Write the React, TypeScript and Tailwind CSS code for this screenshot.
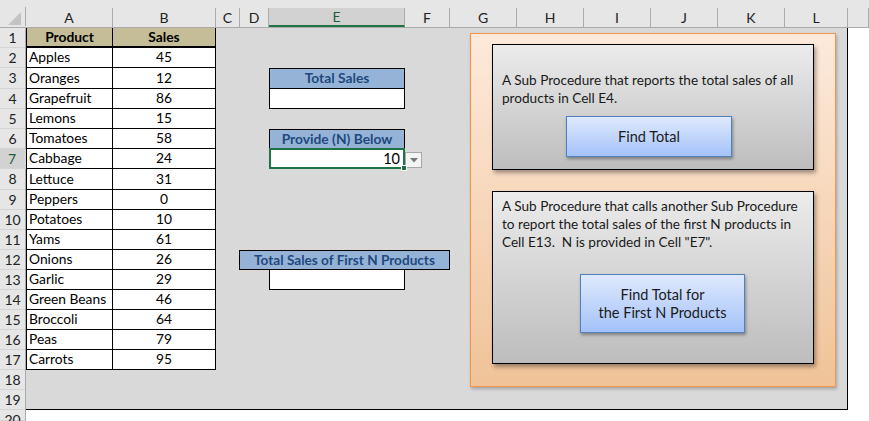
import React from "react";

const colHeaders = [
  { label: "A", w: "w-[87px]" },
  { label: "B", w: "w-[103px]" },
  { label: "C", w: "w-[24px]" },
  { label: "D", w: "w-[29px]" },
  { label: "E", w: "w-[136px]", selected: true },
  { label: "F", w: "w-[45px]" },
  { label: "G", w: "w-[67px]" },
  { label: "H", w: "w-[67px]" },
  { label: "I", w: "w-[67px]" },
  { label: "J", w: "w-[67px]" },
  { label: "K", w: "w-[67px]" },
  { label: "L", w: "w-[63px]" },
  { label: "", w: "w-[21px]" },
];

const products: [string, number][] = [
  ["Apples", 45],
  ["Oranges", 12],
  ["Grapefruit", 86],
  ["Lemons", 15],
  ["Tomatoes", 58],
  ["Cabbage", 24],
  ["Lettuce", 31],
  ["Peppers", 0],
  ["Potatoes", 10],
  ["Yams", 61],
  ["Onions", 26],
  ["Garlic", 29],
  ["Green Beans", 46],
  ["Broccoli", 64],
  ["Peas", 79],
  ["Carrots", 95],
];

// rows 3 and 8 are a pixel taller in the capture
const tallRows = [3, 8];

export default function App() {
  const rows = Array.from({ length: 20 }, (_, i) => i + 1);

  return (
    <div className="w-[869px] h-[421px] overflow-hidden bg-white text-[#222] font-['Lato','Liberation_Sans',sans-serif]">
      {/* column headers */}
      <div className="flex h-[28px] bg-[#e6e6e6] pt-[8px] border-b border-[#ababab]">
        <div className="w-[26px] h-[19px] border-r border-[#ababab] flex items-end justify-end pr-[4px] pb-[1px] -mt-[1px]">
          <svg width="13" height="13" viewBox="0 0 13 13">
            <polygon points="13,0 13,13 0,13" fill="#c3c3c3" />
          </svg>
        </div>
        {colHeaders.map((c) => (
          <div
            key={c.label + c.w}
            className={
              c.selected
                ? `${c.w} h-[19px] bg-[#d2d2d2] border-b-2 border-[#217346] border-r border-r-[#ababab] flex items-center justify-center text-[14px] text-[#1e5e40]`
                : `${c.w} h-[19px] border-r border-[#ababab] flex items-center justify-center text-[14px]`
            }
          >
            {c.label}
          </div>
        ))}
      </div>

      <div className="flex">
        {/* row headers */}
        <div className="w-[26px] flex flex-col bg-[#e6e6e6] border-r border-[#ababab]">
          {rows.map((r) => (
            <div
              key={r}
              className={[
                r === 20 ? "h-[11px] items-start pt-[3px]" : tallRows.includes(r) ? "h-[21px] items-center" : "h-[20px] items-center",
                r === 7
                  ? "bg-[#d2d2d2] border-r-2 border-[#217346] -mr-[1px] text-[#1e5e40]"
                  : "",
                "flex justify-center border-b border-[#d4d4d4] text-[14px] leading-none",
              ].join(" ")}
            >
              {r}
            </div>
          ))}
        </div>

        {/* sheet */}
        <div className="grid grid-cols-[87px_103px_24px_29px_136px_45px_67px_67px_67px_67px_67px_63px_21px] grid-rows-[20px_20px_21px_20px_20px_20px_20px_21px_20px_20px_20px_20px_20px_20px_20px_20px_20px_20px_20px_11px]">
          {/* gray filled range A1:L19 */}
          <div className="col-start-1 col-end-13 row-start-1 row-end-20 bg-[#d9d9d9] border-r border-b border-black" />

          {/* product table A1:B17 */}
          <div className="col-start-1 col-end-3 row-start-1 row-end-18 grid grid-cols-[87px_103px] grid-rows-[20px_20px_21px_20px_20px_20px_20px_21px_20px_20px_20px_20px_20px_20px_20px_20px_20px] text-[13.8px] text-black">
            <div className="bg-[#c4bd97] border-l border-r border-b-2 border-black font-bold flex items-center justify-center">
              Product
            </div>
            <div className="bg-[#c4bd97] border-r border-b-2 border-black font-bold flex items-center justify-center">
              Sales
            </div>
            {products.map(([name, sales]) => (
              <React.Fragment key={name}>
                <div className="bg-white border-l border-r border-b border-black flex items-center pl-[2px]">
                  {name}
                </div>
                <div className="bg-white border-r border-b border-black flex items-center justify-center">
                  {sales}
                </div>
              </React.Fragment>
            ))}
          </div>

          {/* Total Sales E3:E4 */}
          <div className="col-start-5 row-start-3 bg-[#95b3d7] border border-black flex items-center justify-center font-bold text-[13.8px] text-[#1f497d]">
            Total Sales
          </div>
          <div className="col-start-5 row-start-4 bg-white border-x border-b border-black" />

          {/* Provide (N) E6:E7 */}
          <div className="col-start-5 row-start-6 bg-[#95b3d7] border border-black flex items-center justify-center font-bold text-[13.8px] text-[#1f497d]">
            Provide (N) Below
          </div>
          <div className="col-start-5 row-start-7 relative bg-white border-2 border-[#217346] -mt-[1px] flex items-center justify-end pr-[3px] text-[14.5px] text-black">
            10
            <div className="absolute -right-[4px] -bottom-[4px] w-[6px] h-[6px] bg-[#217346] border border-white" />
          </div>
          <div className="col-start-6 row-start-7 w-[17px] h-[16px] mt-[3px] bg-[#f4f4f4] border border-[#a6a6a6] flex items-center justify-center">
            <svg width="8" height="5" viewBox="0 0 8 5">
              <polygon points="0,0 8,0 4,4.5" fill="#767676" />
            </svg>
          </div>

          {/* Total Sales of First N D12:F12, E13 */}
          <div className="col-start-4 col-end-7 row-start-12 -ml-[1px] bg-[#95b3d7] border border-black flex items-center justify-center font-bold text-[13.6px] text-[#1f497d]">
            Total Sales of First N Products
          </div>
          <div className="col-start-5 row-start-13 bg-white border-x border-b border-black" />

          {/* macro panel */}
          <div className="col-start-7 col-end-13 row-start-1 row-end-19 ml-[20px] mr-[12px] mt-[5px] mb-[3px] border border-[#f79646] bg-gradient-to-b from-[#fdeadb] to-[#f0c398] shadow-[1px_2px_3px_rgba(0,0,0,0.25)] pt-[10px] px-[21px] flex flex-col gap-[21px] text-[13.6px] leading-[18px] text-[#1a1a1a]">
            <div className="h-[126px] border border-black bg-gradient-to-b from-[#ececec] to-[#bdbdbd] shadow-[2px_3px_4px_rgba(0,0,0,0.35)] pt-[26px] px-[9px]">
              <p>A Sub Procedure that reports the total sales of all products in Cell E4.</p>
              <div className="mt-[9px] ml-[64px] w-[166px] h-[41px] border border-[#4f81bd] bg-gradient-to-b from-[#dfe9fd] to-[#a4c2fa] shadow-[1px_2px_3px_rgba(0,0,0,0.35)] flex items-center justify-center text-[14.5px]">
                Find Total
              </div>
            </div>
            <div className="h-[173px] border border-black bg-gradient-to-b from-[#ececec] to-[#bdbdbd] shadow-[2px_3px_4px_rgba(0,0,0,0.35)] pt-[5px] px-[9px]">
              <p>
                A Sub Procedure that calls another Sub Procedure to report the total sales of the first N products in
                Cell E13.&nbsp; N is provided in Cell "E7".
              </p>
              <div className="mt-[23px] ml-[78px] w-[165px] h-[59px] border border-[#4f81bd] bg-gradient-to-b from-[#dfe9fd] to-[#a4c2fa] shadow-[1px_2px_3px_rgba(0,0,0,0.35)] flex flex-col items-center justify-center text-[14.5px] leading-[18px]">
                <span>Find Total for</span>
                <span>the First N Products</span>
              </div>
            </div>
          </div>
        </div>
      </div>
    </div>
  );
}
